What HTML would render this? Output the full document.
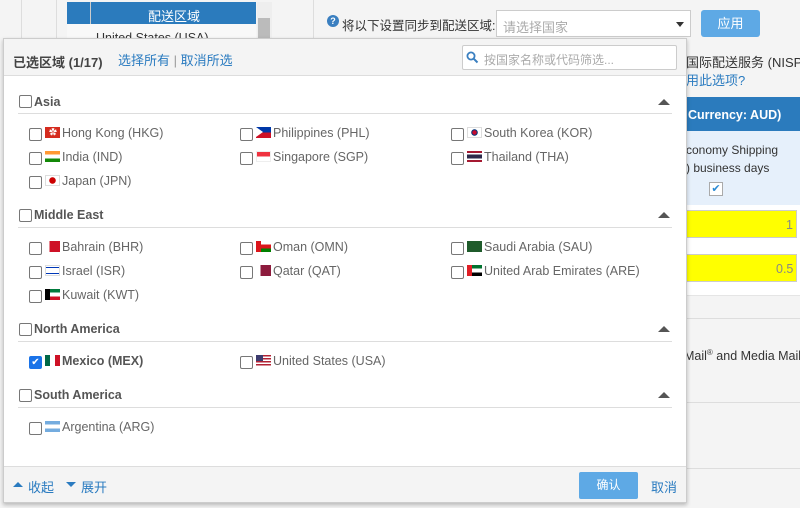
<!DOCTYPE html>
<html><head><meta charset="utf-8"><style>
*{box-sizing:border-box;margin:0;padding:0}
body{width:800px;height:508px;overflow:hidden;background:#f4f4f4;font-family:"Liberation Sans","Noto Sans CJK SC",sans-serif;position:relative;font-size:12.5px;color:#555}
.a{position:absolute}
.cb{position:absolute;width:13px;height:13px;border:1px solid #777;border-radius:2px;background:#fff}
.fl{position:absolute;width:15px;height:11px}
.t{position:absolute;white-space:nowrap;color:#666;margin-top:1px}
.h{position:absolute;font-weight:bold;color:#555;white-space:nowrap;margin-top:1px}
.ln{position:absolute;left:18px;width:654px;height:1px;background:#ddd}
.tri{position:absolute;width:0;height:0;border-left:6px solid transparent;border-right:6px solid transparent;border-bottom:6px solid #555}
</style></head><body>
<!-- background -->
<div class="a" style="left:0;top:0;width:22px;height:40px;border-right:1px solid #ddd"></div>
<div class="a" style="left:56px;top:0;width:1px;height:40px;background:#ddd"></div>
<div class="a" style="left:67px;top:2px;width:189px;height:22px;background:#2b7bbd"></div>
<div class="a" style="left:90px;top:2px;width:1px;height:36px;background:#ccc"></div>
<div class="t" style="left:148px;top:5px;color:#fff;font-size:13px">配送区域</div>
<div class="a" style="left:67px;top:24px;width:189px;height:16px;background:#f8f8f8"></div>
<div class="t" style="left:96px;top:30px;color:#333">United States (USA)</div>
<div class="a" style="left:257px;top:2px;width:15px;height:36px;background:#eee"></div>
<div class="a" style="left:258px;top:18px;width:12px;height:22px;background:#bbb"></div>
<div class="a" style="left:313px;top:0;width:1px;height:40px;background:#ddd"></div>
<div class="a" style="left:327px;top:15px;width:12px;height:12px;border-radius:50%;background:#3a7fc0;color:#fff;font-size:9px;text-align:center;line-height:12px;font-weight:bold">?</div>
<div class="t" style="left:342px;top:14px;color:#333;font-size:12.5px">将以下设置同步到配送区域:</div>
<div class="a" style="left:496px;top:10px;width:195px;height:27px;background:#fff;border:1px solid #ccc"></div>
<div class="t" style="left:503px;top:16px;color:#aaa;font-size:13px">请选择国家</div>
<div class="a" style="left:676px;top:22px;border-left:4px solid transparent;border-right:4px solid transparent;border-top:5px solid #333"></div>
<div class="a" style="left:701px;top:10px;width:59px;height:27px;background:#5ea9e5;border-radius:3px;color:#fff;text-align:center;line-height:27px;font-size:13px">应用</div>
<div class="t" style="left:686px;top:51px;color:#333;font-size:13px">国际配送服务 (NISP)</div>
<div class="t" style="left:686px;top:69px;color:#2a7bc0;font-size:13px">用此选项?</div>
<div class="a" style="left:686px;top:97px;width:114px;height:34px;background:#2b7bbd"></div>
<div class="t" style="left:688px;top:107px;color:#fff;font-weight:bold;font-size:12.5px">Currency: AUD)</div>
<div class="a" style="left:686px;top:131px;width:114px;height:74px;background:#e6f0fb"></div>
<div class="t" style="left:686px;top:142px;color:#333;font-size:12px">conomy Shipping</div>
<div class="t" style="left:686px;top:160px;color:#333;font-size:12px">) business days</div>
<div class="a" style="left:709px;top:182px;width:14px;height:14px;background:#fff;border:1px solid #aaa;color:#2a8ad4;font-size:11px;text-align:center;line-height:12px">✔</div>
<div class="a" style="left:686px;top:205px;width:114px;height:90px;background:#fff"></div>
<div class="a" style="left:686px;top:210px;width:111px;height:28px;background:#ffff00;border:1px solid #ccc"></div>
<div class="t" style="left:786px;top:217px;color:#888">1</div>
<div class="a" style="left:686px;top:254px;width:111px;height:28px;background:#ffff00;border:1px solid #ccc"></div>
<div class="t" style="left:776px;top:261px;color:#888">0.5</div>
<div class="a" style="left:686px;top:295px;width:114px;height:1px;background:#e5e5e5"></div>
<div class="a" style="left:686px;top:318px;width:114px;height:1px;background:#ddd"></div>
<div class="t" style="left:684px;top:347px;color:#333;font-size:12.5px">Mail<sup style="font-size:8px">®</sup> and Media Mail</div>
<div class="a" style="left:686px;top:402px;width:114px;height:1px;background:#ddd"></div>
<div class="a" style="left:686px;top:468px;width:114px;height:1px;background:#ddd"></div>

<!-- popup -->
<div class="a" style="left:3px;top:38px;width:684px;height:465px;background:#fff;border:1px solid #ccc;box-shadow:0 2px 4px rgba(0,0,0,.25)"></div>
<div class="a" style="left:4px;top:39px;width:682px;height:37px;background:#f4f4f4;border-bottom:1px solid #ddd"></div>
<div class="h" style="left:13px;top:51px;color:#444;font-size:13px">已选区域 (1/17)</div>
<div class="t" style="left:118px;top:49px;color:#2a7bc0;font-size:13px">选择所有 <span style="color:#999">|</span> 取消所选</div>
<div class="a" style="left:462px;top:45px;width:215px;height:25px;background:#fff;border:1px solid #ccc;border-radius:2px"></div>
<svg class="a" style="left:466px;top:51px" width="13" height="13" viewBox="0 0 13 13"><circle cx="5" cy="5" r="3.6" fill="none" stroke="#3a7fc0" stroke-width="1.8"/><path d="M7.7 7.7L11.5 11.5" stroke="#3a7fc0" stroke-width="2"/></svg>
<div class="t" style="left:484px;top:50px;color:#aaa;font-size:12px">按国家名称或代码筛选...</div>

<!-- Asia -->
<div class="cb" style="left:19px;top:95px"></div><div class="h" style="left:34px;top:94px">Asia</div>
<div class="tri" style="left:658px;top:99px"></div><div class="ln" style="top:113px"></div>
<div class="cb" style="left:29px;top:128px"></div><div class="fl" style="left:45px;top:127px;background:#d52b1e"><span style="color:#fff;font-size:8px;position:absolute;left:4px;top:0">✿</span></div><div class="t" style="left:62px;top:125px">Hong Kong (HKG)</div>
<div class="cb" style="left:29px;top:152px"></div><div class="fl" style="left:45px;top:151px;background:linear-gradient(#f93 33%,#fff 33% 66%,#138808 66%)"></div><div class="t" style="left:62px;top:149px">India (IND)</div>
<div class="cb" style="left:29px;top:176px"></div><div class="fl" style="left:45px;top:175px;background:radial-gradient(circle,#c00 3px,#fff 3.5px);border:1px solid #ddd"></div><div class="t" style="left:62px;top:173px">Japan (JPN)</div>
<div class="cb" style="left:240px;top:128px"></div><div class="fl" style="left:256px;top:127px;background:linear-gradient(#0038a8 50%,#ce1126 50%)"><div style="position:absolute;left:0;top:0;border-top:5.5px solid transparent;border-bottom:5.5px solid transparent;border-left:7px solid #fff"></div></div><div class="t" style="left:273px;top:125px">Philippines (PHL)</div>
<div class="cb" style="left:240px;top:152px"></div><div class="fl" style="left:256px;top:151px;background:linear-gradient(#ef3340 50%,#fff 50%);border:1px solid #eee"></div><div class="t" style="left:273px;top:149px">Singapore (SGP)</div>
<div class="cb" style="left:451px;top:128px"></div><div class="fl" style="left:467px;top:127px;background:radial-gradient(circle,#c60c30 2px,#003478 2.5px,#003478 3px,#fff 3.5px);border:1px solid #ddd"></div><div class="t" style="left:484px;top:125px">South Korea (KOR)</div>
<div class="cb" style="left:451px;top:152px"></div><div class="fl" style="left:467px;top:151px;background:linear-gradient(#a51931 17%,#fff 17% 33%,#2d2a4a 33% 67%,#fff 67% 83%,#a51931 83%)"></div><div class="t" style="left:484px;top:149px">Thailand (THA)</div>

<!-- Middle East -->
<div class="cb" style="left:19px;top:209px"></div><div class="h" style="left:34px;top:207px">Middle East</div>
<div class="tri" style="left:658px;top:212px"></div><div class="ln" style="top:227px"></div>
<div class="cb" style="left:29px;top:242px"></div><div class="fl" style="left:45px;top:241px;background:linear-gradient(90deg,#fff 30%,#ce1126 30%)"></div><div class="t" style="left:62px;top:239px">Bahrain (BHR)</div>
<div class="cb" style="left:29px;top:266px"></div><div class="fl" style="left:45px;top:265px;background:linear-gradient(#fff 12%,#0038b8 12% 24%,#fff 24% 76%,#0038b8 76% 88%,#fff 88%);border:1px solid #ddd"></div><div class="t" style="left:62px;top:263px">Israel (ISR)</div>
<div class="cb" style="left:29px;top:290px"></div><div class="fl" style="left:45px;top:289px;background:linear-gradient(#007a3d 33%,#fff 33% 66%,#ce1126 66%)"><div style="position:absolute;left:0;top:0;width:5px;height:11px;background:#000"></div></div><div class="t" style="left:62px;top:287px">Kuwait (KWT)</div>
<div class="cb" style="left:240px;top:242px"></div><div class="fl" style="left:256px;top:241px;background:linear-gradient(#fff 33%,#db161b 33% 66%,#008000 66%)"><div style="position:absolute;left:0;top:0;width:5px;height:11px;background:#db161b"></div></div><div class="t" style="left:273px;top:239px">Oman (OMN)</div>
<div class="cb" style="left:240px;top:266px"></div><div class="fl" style="left:256px;top:265px;background:linear-gradient(90deg,#fff 30%,#8d1b3d 30%)"></div><div class="t" style="left:273px;top:263px">Qatar (QAT)</div>
<div class="cb" style="left:451px;top:242px"></div><div class="fl" style="left:467px;top:241px;background:#1f5b2b"></div><div class="t" style="left:484px;top:239px">Saudi Arabia (SAU)</div>
<div class="cb" style="left:451px;top:266px"></div><div class="fl" style="left:467px;top:265px;background:linear-gradient(#00732f 33%,#fff 33% 66%,#000 66%)"><div style="position:absolute;left:0;top:0;width:5px;height:11px;background:#e01f26"></div></div><div class="t" style="left:484px;top:263px">United Arab Emirates (ARE)</div>

<!-- North America -->
<div class="cb" style="left:19px;top:323px"></div><div class="h" style="left:34px;top:321px">North America</div>
<div class="tri" style="left:658px;top:326px"></div><div class="ln" style="top:341px"></div>
<div class="cb" style="left:29px;top:356px;background:#1a73e8;border-color:#1a73e8;color:#fff;font-size:10px;text-align:center;line-height:11px">✔</div><div class="fl" style="left:45px;top:355px;background:linear-gradient(90deg,#006847 33%,#fff 33% 66%,#ce1126 66%)"></div><div class="t" style="left:62px;top:353px;font-weight:bold;color:#555">Mexico (MEX)</div>
<div class="cb" style="left:240px;top:356px"></div><div class="fl" style="left:256px;top:355px;background:repeating-linear-gradient(#b22234 0 1.5px,#fff 1.5px 3px)"><div style="position:absolute;left:0;top:0;width:7px;height:6px;background:#3c3b6e"></div></div><div class="t" style="left:273px;top:353px">United States (USA)</div>

<!-- South America -->
<div class="cb" style="left:19px;top:389px"></div><div class="h" style="left:34px;top:387px">South America</div>
<div class="tri" style="left:658px;top:392px"></div><div class="ln" style="top:407px"></div>
<div class="cb" style="left:29px;top:422px"></div><div class="fl" style="left:45px;top:421px;background:linear-gradient(#74acdf 33%,#fff 33% 66%,#74acdf 66%)"></div><div class="t" style="left:62px;top:419px">Argentina (ARG)</div>

<!-- footer -->
<div class="a" style="left:4px;top:466px;width:682px;height:36px;background:#f4f4f4;border-top:1px solid #ddd"></div>
<div class="a" style="left:13px;top:482px;border-left:5px solid transparent;border-right:5px solid transparent;border-bottom:5px solid #2a7bc0"></div>
<div class="t" style="left:28px;top:476px;color:#2a7bc0;font-size:13px">收起</div>
<div class="a" style="left:66px;top:482px;border-left:5px solid transparent;border-right:5px solid transparent;border-top:5px solid #2a7bc0"></div>
<div class="t" style="left:81px;top:476px;color:#2a7bc0;font-size:13px">展开</div>
<div class="a" style="left:579px;top:472px;width:59px;height:27px;background:#5ea9e5;border-radius:2px;color:#fff;text-align:center;line-height:27px;font-size:12px">确认</div>
<div class="t" style="left:651px;top:476px;color:#2a7bc0;font-size:13px">取消</div>
</body></html>
